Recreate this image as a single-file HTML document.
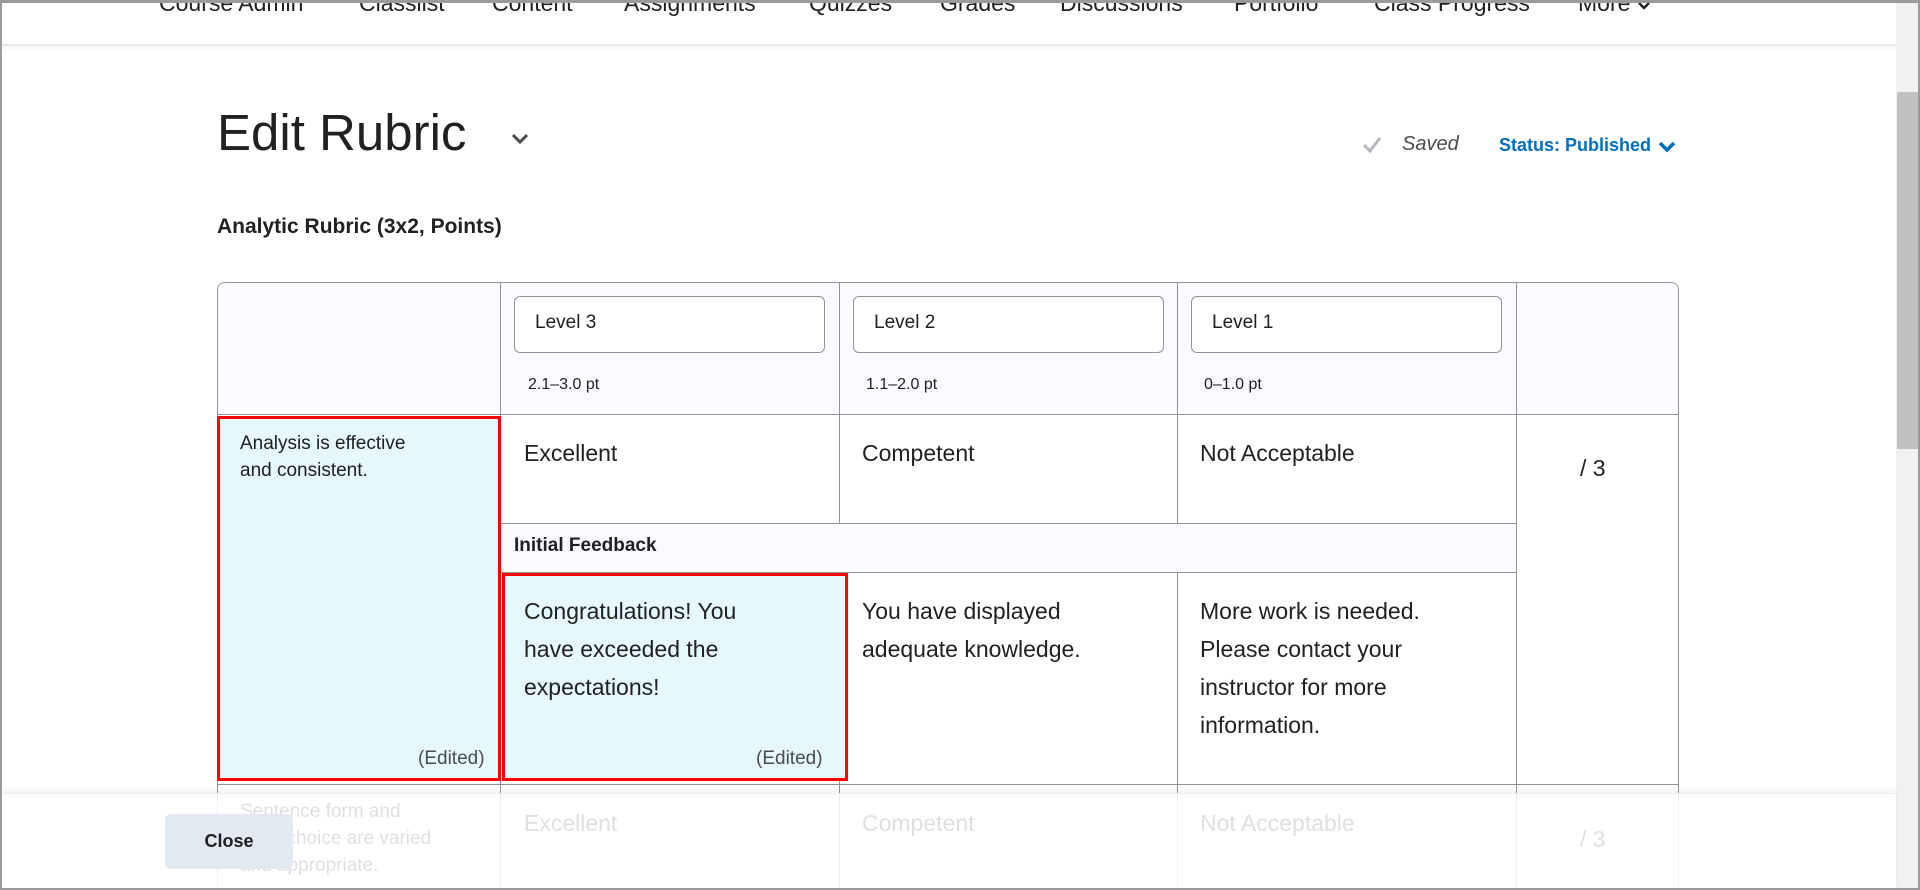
<!DOCTYPE html>
<html><head><meta charset="utf-8"><style>
*{box-sizing:border-box;margin:0;padding:0}
html,body{width:1920px;height:890px;overflow:hidden}
body{background:#fff;font-family:"Liberation Sans",sans-serif;color:#202122;position:relative}
.a{position:absolute;white-space:nowrap}
.frame{position:absolute;left:0;top:0;width:1920px;height:890px;border:2px solid #9b9b9b;border-top:3px solid #9b9b9b;pointer-events:none;z-index:20}
.nav{top:-10px;font-size:23px;color:#202122}
.lv{position:absolute;height:57px;border:1px solid #8f9296;border-radius:6px;background:#fff;font-size:19px;padding:15px 0 0 20px}
.pt{position:absolute;font-size:16px;color:#202122}
.big{font-size:23px;line-height:38px}
</style></head><body>
<div class="frame"></div>
<div class="a nav" style="left:159px">Course Admin</div>
<div class="a nav" style="left:359px">Classlist</div>
<div class="a nav" style="left:492px">Content</div>
<div class="a nav" style="left:624px">Assignments</div>
<div class="a nav" style="left:809px">Quizzes</div>
<div class="a nav" style="left:940px">Grades</div>
<div class="a nav" style="left:1060px">Discussions</div>
<div class="a nav" style="left:1234px">Portfolio</div>
<div class="a nav" style="left:1374px">Class Progress</div>
<div class="a nav" style="left:1578px">More <svg width="14" height="10" viewBox="0 0 14 10"><path d="M2 2l5 5 5-5" stroke="#202122" stroke-width="2.5" fill="none"/></svg></div>
<div class="a" style="left:2px;top:44px;width:1894px;height:2px;background:#e6e8eb"></div>
<div class="a" style="left:2px;top:46px;width:1894px;height:4px;background:#f9fafb"></div>
<div class="a" style="left:1896px;top:0;width:24px;height:890px;background:#f1f1f1"></div>
<div class="a" style="left:1897px;top:92px;width:22px;height:357px;background:#c1c1c1"></div>
<div class="a" style="left:217px;top:103px;font-size:51px;color:#202122">Edit Rubric</div>
<svg class="a" style="left:510px;top:132px" width="20" height="14" viewBox="0 0 20 14"><path d="M3 3l7 7 7-7" stroke="#494c4e" stroke-width="3" fill="none"/></svg>
<svg class="a" style="left:1362px;top:136px" width="20" height="18" viewBox="0 0 20 18"><path d="M2 9l6 6L18 2" stroke="#b4b8bc" stroke-width="3" fill="none"/></svg>
<div class="a" style="left:1402px;top:133px;font-size:20px;font-style:italic;color:#494c4e">Saved</div>
<div class="a" style="left:1499px;top:135px;font-size:18px;font-weight:bold;color:#006fbf">Status: Published</div>
<svg class="a" style="left:1657px;top:140px" width="20" height="14" viewBox="0 0 20 14"><path d="M3 3l7 7 7-7" stroke="#006fbf" stroke-width="3.5" fill="none"/></svg>
<div class="a" style="left:217px;top:215px;font-size:21px;font-weight:bold">Analytic Rubric (3x2, Points)</div>
<div class="a" style="left:217px;top:282px;width:1462px;height:608px;border:1px solid #8f9296;border-bottom:0;border-radius:8px 8px 0 0;overflow:hidden">
  <div class="a" style="left:0;top:0;width:1460px;height:132px;background:#f9fbff;border-bottom:1px solid #8f9296"></div>
</div>
<div class="a" style="left:500px;top:283px;width:1px;height:607px;background:#8f9296"></div>
<div class="a" style="left:839px;top:283px;width:1px;height:240px;background:#8f9296"></div>
<div class="a" style="left:1177px;top:283px;width:1px;height:240px;background:#8f9296"></div>
<div class="a" style="left:839px;top:572px;width:1px;height:318px;background:#8f9296"></div>
<div class="a" style="left:1177px;top:572px;width:1px;height:318px;background:#8f9296"></div>
<div class="a" style="left:1516px;top:283px;width:1px;height:607px;background:#8f9296"></div>
<div class="lv" style="left:514px;top:296px;width:311px">Level 3</div>
<div class="lv" style="left:853px;top:296px;width:311px">Level 2</div>
<div class="lv" style="left:1191px;top:296px;width:311px">Level 1</div>
<div class="pt a" style="left:528px;top:376px">2.1–3.0 pt</div>
<div class="pt a" style="left:866px;top:376px">1.1–2.0 pt</div>
<div class="pt a" style="left:1204px;top:376px">0–1.0 pt</div>
<div class="a big" style="left:524px;top:434px">Excellent</div>
<div class="a big" style="left:862px;top:434px">Competent</div>
<div class="a big" style="left:1200px;top:434px">Not Acceptable</div>
<div class="a" style="left:1580px;top:455px;font-size:23px">/ 3</div>
<div class="a" style="left:500px;top:523px;width:1016px;height:50px;background:#f9fbff;border-top:1px solid #8f9296;border-bottom:1px solid #8f9296"></div>
<div class="a" style="left:514px;top:535px;font-size:19px;font-weight:bold">Initial Feedback</div>
<div class="a" style="left:500px;top:784px;width:1179px;height:1px;background:#8f9296"></div>
<div class="a" style="left:217px;top:784px;width:284px;height:1px;background:#8f9296"></div>
<div class="a" style="left:217px;top:416px;width:284px;height:365px;background:#e6f7fd;border:3px solid #f00"></div>
<div class="a" style="left:240px;top:430px;font-size:19px;line-height:27px;white-space:normal;width:200px">Analysis is effective and consistent.</div>
<div class="a" style="left:418px;top:748px;font-size:19px;color:#494c4e">(Edited)</div>
<div class="a" style="left:502px;top:573px;width:346px;height:208px;background:#e6f7fd;border:3px solid #f00"></div>
<div class="a big" style="left:524px;top:592px;white-space:normal;width:245px">Congratulations! You have exceeded the expectations!</div>
<div class="a" style="left:756px;top:748px;font-size:19px;color:#494c4e">(Edited)</div>
<div class="a big" style="left:862px;top:592px;white-space:normal;width:240px">You have displayed adequate knowledge.</div>
<div class="a big" style="left:1200px;top:592px;white-space:normal;width:255px">More work is needed. Please contact your instructor for more information.</div>
<div class="a" style="left:240px;top:798px;font-size:19px;line-height:27px">Sentence form and<br>word choice are varied<br>and appropriate.</div>
<div class="a big" style="left:524px;top:804px">Excellent</div>
<div class="a big" style="left:862px;top:804px">Competent</div>
<div class="a big" style="left:1200px;top:804px">Not Acceptable</div>
<div class="a" style="left:1580px;top:826px;font-size:23px">/ 3</div>
<div class="a" style="left:2px;top:793px;width:1894px;height:97px;background:rgba(255,255,255,0.86);border-top:1px solid #eceef0;box-shadow:0 -3px 6px rgba(0,0,0,0.06)"></div>
<div class="a" style="left:165px;top:814px;width:128px;height:55px;background:#e3e9f1;border-radius:6px;font-size:18px;font-weight:bold;text-align:center;line-height:55px">Close</div>
</body></html>
